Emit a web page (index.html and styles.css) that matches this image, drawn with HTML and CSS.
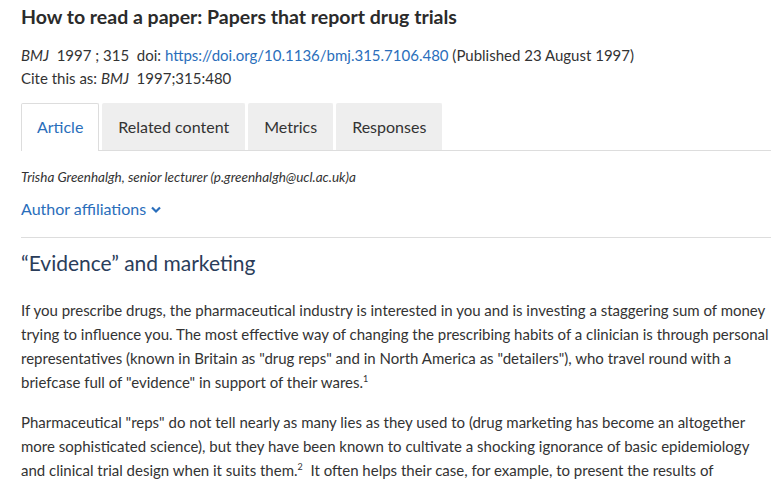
FILE: index.html
```html
<!DOCTYPE html>
<html lang="en">
<head>
<meta charset="utf-8">
<title>How to read a paper: Papers that report drug trials</title>
<link rel="stylesheet" href="styles.css">
</head>
<body>
<main class="page">
  <h1 class="title">How to read a paper: Papers that report drug trials</h1>
  <div class="meta">
    <div class="meta-line"><i>BMJ</i>&nbsp; 1997 ; 315 &nbsp;doi: <a class="link" href="#">https://doi.org/10.1136/bmj.315.7106.480</a> (Published 23 August 1997)</div>
    <div class="meta-line">Cite this as: <i>BMJ</i>&nbsp; 1997;315:480</div>
  </div>
  <nav class="tabs">
    <a class="tab active" href="#">Article</a>
    <a class="tab" href="#">Related content</a>
    <a class="tab" href="#">Metrics</a>
    <a class="tab" href="#">Responses</a>
  </nav>
  <p class="author">Trisha Greenhalgh, senior lecturer (p.greenhalgh@ucl.ac.uk)a</p>
  <div class="affil">Author affiliations <svg class="chev" width="10" height="8" viewBox="0 0 10 8"><path d="M1 1.5 L5 5.5 L9 1.5" fill="none" stroke="currentColor" stroke-width="2.2"/></svg></div>
  <hr class="rule">
  <h2 class="section">“Evidence” and marketing</h2>
  <p class="para">If you prescribe drugs, the pharmaceutical industry is interested in you and is investing a staggering sum of money trying to influence you. The most effective way of changing the prescribing habits of a clinician is through personal representatives (known in Britain as "drug reps" and in North America as "detailers"), who travel round with a briefcase full of "evidence" in support of their wares.<sup>1</sup></p>
  <p class="para">Pharmaceutical "reps" do not tell nearly as many lies as they used to (drug marketing has become an altogether more sophisticated science), but they have been known to cultivate a shocking ignorance of basic epidemiology and clinical trial design when it suits them.<sup>2</sup>&nbsp; It often helps their case, for example, to present the results of uncontrolled trials and to express the benefits of a drug in terms of relative risk reduction.</p>
</main>
</body>
</html>
```
FILE: styles.css
```css
html, body {
  margin: 0;
  padding: 0;
  background: #fff;
}
body {
  font-family: Lato, "Open Sans", sans-serif;
  color: #333;
  overflow: hidden;
}
.page {
  padding: 4px 0 0 21px;
}
.title {
  font-size: 19.5px;
  font-weight: 700;
  color: #2b2b2b;
  margin: 0;
  line-height: 26px;
}
.meta {
  margin-top: 14px;
  font-size: 15px;
  line-height: 23px;
  color: #333;
}
.link {
  color: #2a6ebb;
  text-decoration: none;
}
.tabs {
  display: flex;
  gap: 3px;
  margin-top: 13px;
  border-bottom: 1px solid #ddd;
}
.tab {
  display: block;
  height: 46px;
  line-height: 46px;
  padding: 0 15px;
  background: #eee;
  color: #333;
  font-size: 16px;
  text-decoration: none;
  border: 1px solid #eee;
  border-bottom: none;
  margin-bottom: -1px;
  border-radius: 2px 2px 0 0;
}
.tab.active {
  background: #fff;
  color: #2a6ebb;
  border-color: #ddd;
  height: 47px;
}
.author {
  margin: 17px 0 0;
  font-size: 13.5px;
  font-style: italic;
  line-height: 18px;
  color: #333;
}
.affil {
  margin-top: 13px;
  font-size: 16px;
  line-height: 20px;
  color: #2a6ebb;
  display: flex;
  align-items: center;
  gap: 5px;
}
.chev {
  display: block;
  margin-top: 1px;
}
.rule {
  border: 0;
  border-top: 1px solid #ddd;
  margin: 18px 0 0;
}
.section {
  font-size: 21px;
  font-weight: 400;
  color: #2a3d5a;
  margin: 11px 0 0;
  line-height: 28px;
}
.para {
  font-size: 15px;
  line-height: 24px;
  margin: 21px 0 0;
  color: #333;
  padding-right: 0;
}
.para + .para {
  margin-top: 16px;
}
sup {
  font-size: 9px;
  line-height: 0;
}
```
